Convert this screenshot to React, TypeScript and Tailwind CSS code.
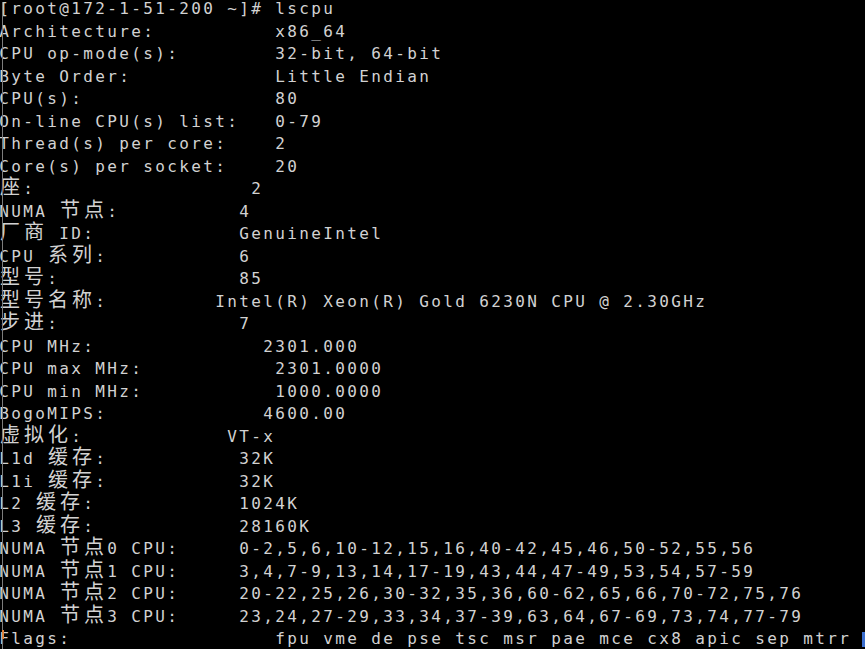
import React from "react";

type L = [string, string?, number?];

const lines: L[] = [
  ["[root@172-1-51-200 ~]# lscpu"],
  ["Architecture:", "x86_64", 23],
  ["CPU op-mode(s):", "32-bit, 64-bit", 23],
  ["Byte Order:", "Little Endian", 23],
  ["CPU(s):", "80", 23],
  ["On-line CPU(s) list:", "0-79", 23],
  ["Thread(s) per core:", "2", 23],
  ["Core(s) per socket:", "20", 23],
  ["座：", "2", 21],
  ["NUMA 节点：", "4", 20],
  ["厂商 ID：", "GenuineIntel", 20],
  ["CPU 系列：", "6", 20],
  ["型号：", "85", 20],
  ["型号名称：", "Intel(R) Xeon(R) Gold 6230N CPU @ 2.30GHz", 18],
  ["步进：", "7", 20],
  ["CPU MHz：", "2301.000", 22],
  ["CPU max MHz：", "2301.0000", 23],
  ["CPU min MHz：", "1000.0000", 23],
  ["BogoMIPS：", "4600.00", 22],
  ["虚拟化：", "VT-x", 19],
  ["L1d 缓存：", "32K", 20],
  ["L1i 缓存：", "32K", 20],
  ["L2 缓存：", "1024K", 20],
  ["L3 缓存：", "28160K", 20],
  ["NUMA 节点0 CPU：", "0-2,5,6,10-12,15,16,40-42,45,46,50-52,55,56", 20],
  ["NUMA 节点1 CPU：", "3,4,7-9,13,14,17-19,43,44,47-49,53,54,57-59", 20],
  ["NUMA 节点2 CPU：", "20-22,25,26,30-32,35,36,60-62,65,66,70-72,75,76", 20],
  ["NUMA 节点3 CPU：", "23,24,27-29,33,34,37-39,63,64,67-69,73,74,77-79", 20],
  ["Flags:", "fpu vme de pse tsc msr pae mce cx8 apic sep mtrr pge", 23],
];

const isWide = (c: string) => /[\u3000-\u9fff\uff00-\uffef]/.test(c);

function Cell({ ch }: { ch: string }) {
  if (isWide(ch)) {
    if (ch === "：") {
      return (
        <span className="inline-block w-[24px] text-left">
          <span className="inline-block w-[12px] text-center">:</span>
        </span>
      );
    }
    return (
      <span className="inline-block w-[24px] text-center font-['Noto_Sans_CJK_SC',sans-serif] text-[20px] leading-[16px]">
        {ch}
      </span>
    );
  }
  return (
    <span className="inline-block w-[12px] text-center">
      {ch === " " ? "\u00a0" : ch}
    </span>
  );
}

function Line({ label, value, col }: { label: string; value?: string; col?: number }) {
  const chars = [...label];
  const width = chars.reduce((s, c) => s + (isWide(c) ? 2 : 1), 0);
  const pad = value !== undefined && col !== undefined ? Math.max(1, col - width) : 0;
  const all = [...chars, ...Array(pad).fill(" "), ...(value ? [...value] : [])];
  return (
    <div className="h-[22.5px] shrink-0 whitespace-nowrap leading-[22.5px]">
      {all.map((c, i) => (
        <Cell key={i} ch={c} />
      ))}
    </div>
  );
}

export default function App() {
  return (
    <div className="relative h-[649px] w-[865px] overflow-hidden bg-black font-['DejaVu_Sans_Mono',monospace] text-[16px] text-[#d2d2d2]">
      <div className="-ml-[2px] -mt-[2px] flex flex-col">
        {lines.map(([l, v, c], i) => (
          <Line key={i} label={l} value={v} col={c} />
        ))}
      </div>
      <div className="absolute left-[2px] top-[2px] h-full w-px bg-[#7c7c7c]" />
      <div className="absolute left-[2px] top-[630px] h-[9px] w-[2px] bg-[#e0823a]" />
      <div className="absolute right-0 top-[632px] h-[15px] w-[3px] bg-[#3b6fd0]" />
    </div>
  );
}
